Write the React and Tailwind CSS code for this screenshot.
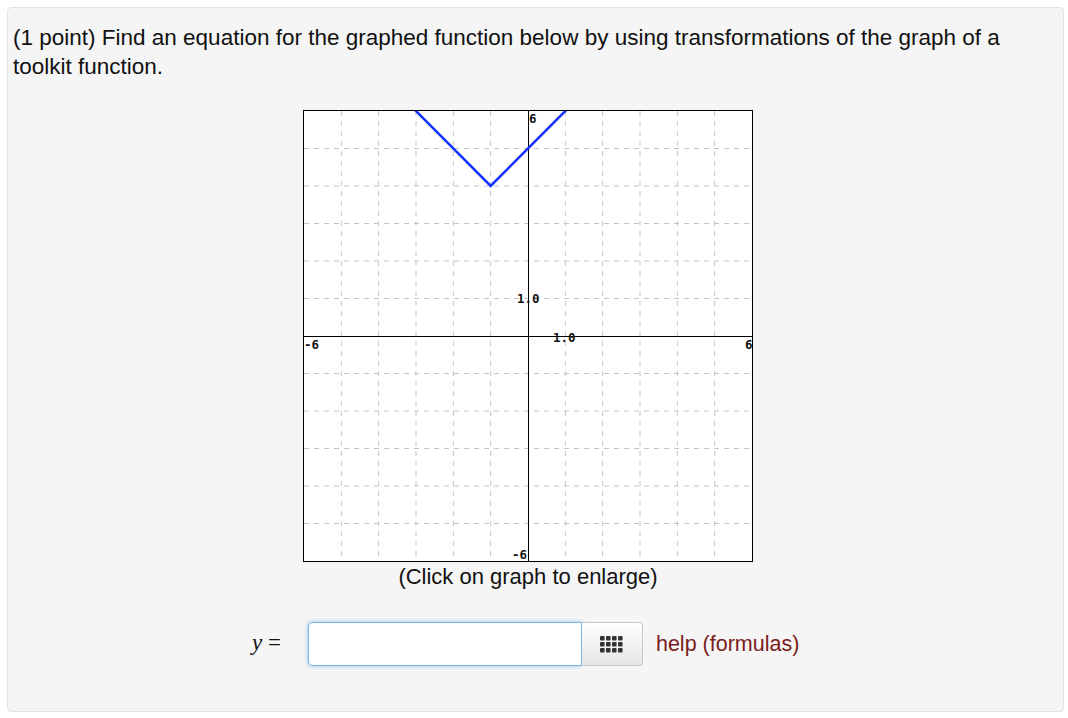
import React from "react";

function Graph() {
  const ox = 303;
  const oy = 109;
  const px = (x) => 528 + x * 37.333 - ox;
  const py = (y) => 336 - y * 37.5 - oy;
  const ticks = [-5, -4, -3, -2, -1, 1, 2, 3, 4, 5];
  return (
    <svg width="451" height="453" viewBox="0 0 451 453" className="block">
      <rect x="0.5" y="1.5" width="449" height="451" fill="#ffffff" />
      {ticks.map((t) => (
        <line key={"v" + t} x1={px(t)} y1={py(6)} x2={px(t)} y2={py(-6)} stroke="#c4c4c4" strokeWidth="1" strokeDasharray="5 5" />
      ))}
      {ticks.map((t) => (
        <line key={"h" + t} x1={px(-6)} y1={py(t)} x2={px(6)} y2={py(t)} stroke="#c4c4c4" strokeWidth="1" strokeDasharray="5 5" />
      ))}
      <line x1={px(-6)} y1={py(0) + 0.5} x2={px(6)} y2={py(0) + 0.5} stroke="#000" strokeWidth="1" />
      <line x1={px(0) + 0.5} y1={py(6)} x2={px(0) + 0.5} y2={py(-6)} stroke="#000" strokeWidth="1" />
      <clipPath id="clipg">
        <rect x={px(-6)} y={py(6)} width={px(6) - px(-6)} height={py(-6) - py(6)} />
      </clipPath>
      <polyline
        clipPath="url(#clipg)"
        points={`${px(-3.1)},${py(6.1)} ${px(-1)},${py(4)} ${px(1.1)},${py(6.1)}`}
        fill="none"
        stroke="#1530ff"
        strokeWidth="2.5"
      />
      <rect x="0.5" y="1.5" width="449" height="451" fill="none" stroke="#000" strokeWidth="1" />
      <g fontFamily="'DejaVu Sans Mono', 'Liberation Mono', monospace" fontWeight="bold" fontSize="12.5" fill="#111">
        <text x={529 - ox} y={123 - oy}>6</text>
        <text x={517 - ox} y={303 - oy}>1.0</text>
        <text x={553 - ox} y={342 - oy}>1.0</text>
        <text x={304 - ox} y={349 - oy}>-6</text>
        <text x={745 - ox} y={349 - oy}>6</text>
        <text x={512 - ox} y={559 - oy}>-6</text>
      </g>
    </svg>
  );
}

function GridIcon() {
  const cells = [];
  for (let r = 0; r < 3; r++) {
    for (let c = 0; c < 4; c++) {
      cells.push(<rect key={r + "-" + c} x={c * 6} y={r * 6} width="4.6" height="4.6" rx="1" fill="#333" />);
    }
  }
  return (
    <svg width="23" height="17" viewBox="0 0 23 17">
      {cells}
    </svg>
  );
}

export default function App() {
  return (
    <div className="w-[1068px] h-[718px] bg-white pt-[7px] pl-[7px]" style={{ fontFamily: "'Liberation Sans', Arial, sans-serif" }}>
      <div className="w-[1057px] h-[705px] bg-[#f5f5f5] border border-[#e3e3e3] rounded-[4px] pl-[5px] pr-[20px] pt-[15px]">
        <p className="text-[22.5px] leading-[29px] text-[#111]">
          (1 point) Find an equation for the graphed function below by using transformations of the graph of a toolkit function.
        </p>
        <div className="flex flex-col items-center mt-[28px]">
          <div>
            <Graph />
          </div>
          <div className="text-[22px] leading-[26px] text-[#111] mt-[2px]">(Click on graph to enlarge)</div>
        </div>
        <div className="flex items-center mt-[32px] ml-[239px]">
          <span className="text-[23px] text-[#111] mr-[27px] -mt-[2px]" style={{ fontFamily: "'Liberation Serif', 'DejaVu Serif', serif" }}>
            <i>y</i> =
          </span>
          <div className="w-[274px] h-[44px] bg-white border border-[#7eb3e6] rounded-l-[4px] shadow-[0_0_4px_rgba(82,168,236,0.6)]" />
          <div className="w-[61px] h-[44px] flex items-center justify-center border border-[#c8c8c8] border-l-0 rounded-r-[4px] bg-gradient-to-b from-white to-[#e6e6e6]">
            <GridIcon />
          </div>
          <span className="ml-[13px] text-[21.5px] text-[#7a1c1c]">help (formulas)</span>
        </div>
      </div>
    </div>
  );
}
